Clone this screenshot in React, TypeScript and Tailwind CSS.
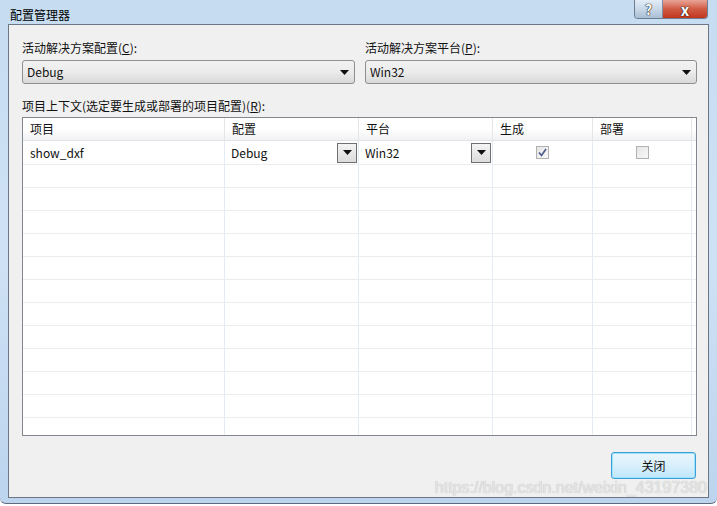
import React from 'react';

const font = { fontFamily: '"Noto Sans CJK SC", "Noto Sans", sans-serif' };

const columns = ['项目', '配置', '平台', '生成', '部署'];
const colWidths = ['w-[202px]', 'w-[134px]', 'w-[134px]', 'w-[100px]', 'w-[99px]'];

function Arrow() {
  return (
    <svg width="9" height="5" viewBox="0 0 9 5">
      <path d="M0 0 H9 L4.5 5 Z" fill="#111" />
    </svg>
  );
}

function Combo({ value }: { value: string }) {
  return (
    <div className="flex h-[24px] items-center justify-between rounded-[3px] border border-[#8e8f8f] bg-gradient-to-b from-[#f2f2f2] via-[#ebebeb] to-[#d9d9d9] pl-[4px] pr-[5px] text-[12px] text-[#111]">
      <span>{value}</span>
      <Arrow />
    </div>
  );
}

function CellCombo({ value }: { value: string }) {
  return (
    <div className="flex h-full items-center justify-between pl-[6px] pr-[1px]">
      <span>{value}</span>
      <div className="flex h-[20px] w-[20px] items-center justify-center border border-[#6f6f6f] bg-gradient-to-b from-[#f4f4f4] to-[#dcdcdc]">
        <Arrow />
      </div>
    </div>
  );
}

function Check({ checked }: { checked: boolean }) {
  return (
    <div className="flex h-[13px] w-[13px] items-center justify-center border border-[#b1b1b1] bg-gradient-to-br from-[#e6e6e6] to-[#f8f8f8]">
      {checked && (
        <svg width="9" height="9" viewBox="0 0 9 9">
          <path d="M1 4.5 L3.5 7.5 L8 1" stroke="#4a5a8a" strokeWidth="1.6" fill="none" />
        </svg>
      )}
    </div>
  );
}

export default function App() {
  const emptyRows = Array.from({ length: 11 });

  return (
    <div className="h-[506px] w-[717px] overflow-hidden bg-white" style={font}>
      <div className="flex h-[504px] flex-col rounded-b-[6px] border-b border-[#5d6b7c] bg-gradient-to-b from-[#c6dcf1] via-[#cfe2f5] to-[#bcd4ee]">
        {/* title bar */}
        <div className="flex h-[29px] items-start justify-between">
          <div className="pl-[10px] pt-[6px] text-[12px] text-black">配置管理器</div>
          <div className="mr-[9px] flex h-[19px] overflow-hidden rounded-b-[4px] border border-t-0 border-[#6a7d93]">
            <div className="flex w-[28px] items-center justify-center border-r border-[#7d8ea3] bg-gradient-to-b from-[#e3edf7] via-[#c9d8e8] to-[#a9bed4] text-[14px] font-bold text-white [text-shadow:0_0_1px_#222,0_0_1px_#222,0_0_1px_#222]">
              ?
            </div>
            <div className="flex w-[44px] items-center justify-center bg-gradient-to-b from-[#e8a497] via-[#d05a44] to-[#c2351c] text-[15px] font-bold leading-none text-white [text-shadow:0_0_1px_#222,0_0_1px_#222,0_0_1px_#222]">
              x
            </div>
          </div>
        </div>

        {/* client area */}
        <div className="mx-[8px] mb-[7px] flex flex-1 flex-col border border-[#6d7684] bg-[#f0f0f0] pl-[13px] pr-[11px] text-[12px] text-[#111]">
          <div className="mt-[14px] flex gap-[10px]">
            <div className="flex w-[333px] flex-col gap-[4px]">
              <div className="h-[17px] leading-[17px]">活动解决方案配置(<span className="underline">C</span>):</div>
              <Combo value="Debug" />
            </div>
            <div className="flex flex-1 flex-col gap-[4px]">
              <div className="h-[17px] leading-[17px]">活动解决方案平台(<span className="underline">P</span>):</div>
              <Combo value="Win32" />
            </div>
          </div>

          <div className="mt-[13px] h-[17px] leading-[17px]">
            项目上下文(选定要生成或部署的项目配置)(<span className="underline">R</span>):
          </div>

          <div className="mt-[3px] flex h-[319px] flex-col border border-[#828790] bg-white">
            {/* header */}
            <div className="flex h-[23px] border-b border-[#e3e3e3] bg-gradient-to-b from-white via-white to-[#f1f2f4]">
              {columns.map((c, i) => (
                <div key={c} className={`${colWidths[i]} flex items-center border-r border-[#e5e5e5] pl-[7px]`}>
                  {c}
                </div>
              ))}
              <div className="flex-1" />
            </div>

            {/* first row */}
            <div className="flex h-[24px] border-b border-[#ececec]">
              <div className="flex w-[202px] items-center border-r border-[#e4ebf5] pl-[7px]">show_dxf</div>
              <div className="w-[134px] border-r border-[#e4ebf5]">
                <CellCombo value="Debug" />
              </div>
              <div className="w-[134px] border-r border-[#e4ebf5]">
                <CellCombo value="Win32" />
              </div>
              <div className="flex w-[100px] items-center justify-center border-r border-[#e4ebf5]">
                <Check checked />
              </div>
              <div className="flex w-[99px] items-center justify-center border-r border-[#e4ebf5]">
                <Check checked={false} />
              </div>
              <div className="flex-1" />
            </div>

            {emptyRows.map((_, r) => (
              <div key={r} className="flex h-[23px] border-b border-[#ececec]">
                {colWidths.map((w, i) => (
                  <div key={i} className={`${w} border-r border-[#e4ebf5]`} />
                ))}
                <div className="flex-1" />
              </div>
            ))}
            <div className="flex flex-1">
              {colWidths.map((w, i) => (
                <div key={i} className={`${w} border-r border-[#e4ebf5]`} />
              ))}
            </div>
          </div>

          <div className="mt-[16px] flex justify-end pr-[1px]">
            <button className="h-[27px] w-[85px] rounded-[3px] border border-[#3c9fd8] bg-gradient-to-b from-[#eaf6fd] via-[#d9f0fc] to-[#bee6fd] text-[12px] text-[#111] shadow-[inset_0_0_0_1px_#9ee3fb]">
              关闭
            </button>
          </div>

          <div className="-mr-[10px] flex justify-end">
            <span
              className="text-[16px] leading-[18px] text-[#e6e6e6] [text-shadow:0_0_1px_#b0b0b0]"
              style={{ fontFamily: '"Liberation Sans", sans-serif' }}
            >
              https://blog.csdn.net/weixin_43197380
            </span>
          </div>
        </div>
      </div>
    </div>
  );
}
